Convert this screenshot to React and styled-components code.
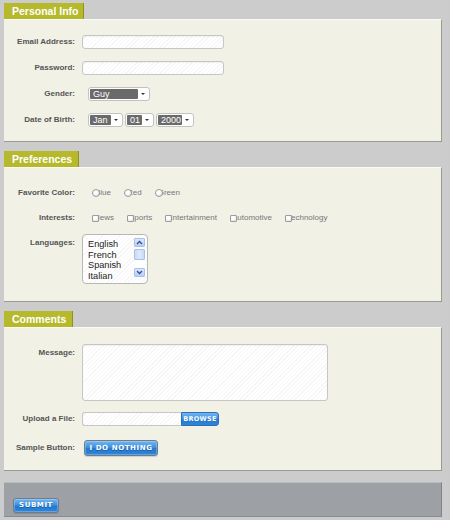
import React from 'react';
import styled, { createGlobalStyle } from 'styled-components';

const Global = createGlobalStyle`
  html, body { margin: 0; padding: 0; background: #cccccc; }
  body { font-family: 'Liberation Sans', Arial, sans-serif; }
  * { box-sizing: border-box; }
`;

const stripes = `repeating-linear-gradient(135deg, #ffffff 0px, #ffffff 2px, #f6f6f6 2px, #f6f6f6 3px)`;

const Page = styled.div`
  width: 450px;
  height: 520px;
  padding: 3px 8px 0 4px;
  display: flex;
  flex-direction: column;
  gap: 9px;
  background: #cccccc;
`;

const Section = styled.section`
  display: flex;
  flex-direction: column;
`;

const Tab = styled.h2`
  margin: 0;
  align-self: flex-start;
  width: ${p => p.$w}px;
  height: 16px;
  padding-left: 8px;
  background: #b6b92b;
  border-right: 1px solid #8f921c;
  color: #ffffff;
  font: bold 10.5px/16px 'Liberation Sans', Arial, sans-serif;
  white-space: nowrap;
`;

const Panel = styled.div`
  background: #f1f1e6;
  border-top: 1px solid #fbfbf5;
  border-right: 1px solid #999a94;
  border-bottom: 1px solid #999a94;
  padding: ${p => p.$pt}px 0 ${p => p.$pb}px 0;
  display: flex;
  flex-direction: column;
`;

const Row = styled.div`
  display: flex;
  align-items: ${p => (p.$top ? 'flex-start' : 'center')};
  height: ${p => p.$h}px;
  margin-top: ${p => p.$mt || 0}px;
`;

const Label = styled.label`
  flex: none;
  width: 71px;
  margin-right: 7px;
  padding-top: ${p => p.$pt || 0}px;
  text-align: right;
  color: #555555;
  font: bold 8px/10px 'Liberation Sans', Arial, sans-serif;
  white-space: nowrap;
`;

const TextInput = styled.input`
  width: ${p => p.$w}px;
  height: 14px;
  margin: 0;
  padding: 0 3px;
  border: 1px solid #c6c6c6;
  border-radius: 3px;
  background: ${stripes};
  box-shadow: inset 0 1px 1px rgba(0,0,0,0.05);
  font: 9px 'Liberation Sans', Arial, sans-serif;
  outline: none;
`;

const TextArea = styled.textarea`
  width: 246px;
  height: 57px;
  margin: 0;
  padding: 3px;
  border: 1px solid #c6c6c6;
  border-radius: 3px;
  background: ${stripes};
  box-shadow: inset 0 1px 1px rgba(0,0,0,0.05);
  resize: none;
  outline: none;
`;

const Selects = styled.div`
  display: flex;
  gap: 2px;
  margin-left: 6px;
`;

const Select = styled.div`
  display: flex;
  width: ${p => p.$w}px;
  height: 14px;
  padding: 1px;
  border: 1px solid #c2c2c2;
  border-radius: 3px;
  background: #ffffff;
`;

const SelectValue = styled.span`
  flex: 1;
  padding-left: 3px;
  background: #6a6a6a;
  border-radius: 1px;
  color: #ffffff;
  font: 9px/10px 'Liberation Sans', Arial, sans-serif;
`;

const SelectArrow = styled.span`
  flex: none;
  width: 10px;
  display: flex;
  align-items: center;
  justify-content: center;
  &::after {
    content: '';
    border-left: 2px solid transparent;
    border-right: 2px solid transparent;
    border-top: 2px solid #333333;
  }
`;

const Choices = styled.div`
  display: flex;
  align-items: center;
  gap: ${p => p.$gap}px;
  margin-left: 10px;
`;

const Choice = styled.span`
  display: inline-flex;
  align-items: center;
  color: #777777;
  font: 8px/10px 'Liberation Sans', Arial, sans-serif;
  white-space: nowrap;
`;

const Mark = styled.span`
  position: relative;
  z-index: 1;
  flex: none;
  width: ${p => (p.$round ? 8 : 7)}px;
  height: ${p => (p.$round ? 8 : 7)}px;
  margin-right: -5px;
  border: 1px solid #9c9c9c;
  border-radius: ${p => (p.$round ? '50%' : '1px')};
  background: radial-gradient(circle at 40% 35%, #ffffff 30%, #dcdcdc 100%);
`;

const ListBox = styled.div`
  display: flex;
  width: 66px;
  height: 50px;
  padding: 3px 2px 6px 5px;
  border: 1px solid #b8b8b8;
  border-radius: 4px;
  background: ${stripes};
`;

const ListItems = styled.ul`
  flex: 1;
  margin: 0;
  padding: 1px 0 0 0;
  list-style: none;
  color: #222222;
  font: 9.2px/10.5px 'Liberation Sans', Arial, sans-serif;
`;

const ScrollBar = styled.div`
  flex: none;
  width: 11px;
  display: flex;
  flex-direction: column;
  background: #ffffff;
`;

const ScrollButton = styled.span`
  height: 9px;
  display: flex;
  align-items: center;
  justify-content: center;
  border: 1px solid #aac0e8;
  border-radius: 1px;
  background: linear-gradient(#dce7fb, #b8cdf4);
  margin-top: ${p => (p.$down ? 'auto' : '0')};
`;

const ScrollThumb = styled.span`
  height: 11px;
  margin-top: 2px;
  border: 1px solid #aac0e8;
  border-radius: 1px;
  background: linear-gradient(90deg, #c9d9f8, #dfe8fb, #c9d9f8);
`;

const FileField = styled.div`
  display: flex;
  height: 14px;
`;

const FileInput = styled.input`
  width: 99px;
  height: 14px;
  margin: 0;
  border: 1px solid #c6c6c6;
  border-right: none;
  border-radius: 3px 0 0 3px;
  background: ${stripes};
  outline: none;
`;

const blueFill = `linear-gradient(#74b5ef 0%, #3f93e0 45%, #2478cf 55%, #2f86d9 100%)`;

const BrowseButton = styled.button`
  width: 38px;
  height: 14px;
  margin: 0;
  padding: 0;
  border: 1px solid #2c6fb5;
  border-radius: 0 3px 3px 0;
  background: ${blueFill};
  color: #ffffff;
  font: bold 6.5px/12px 'DejaVu Sans', Verdana, sans-serif;
  letter-spacing: 0.3px;
`;

const BlueButton = styled.button`
  width: ${p => p.$w}px;
  height: ${p => p.$h}px;
  margin: 0 0 0 ${p => p.$ml || 0}px;
  padding: 0;
  border: 1px solid #6d7c8a;
  border-radius: 3px;
  background: ${blueFill};
  box-shadow: inset 0 0 0 1px rgba(255,255,255,0.25), 0 1px 1px rgba(0,0,0,0.15);
  color: #ffffff;
  font: bold 7px/${p => p.$h - 2}px 'DejaVu Sans', Verdana, sans-serif;
  letter-spacing: 0.6px;
  text-shadow: 0 1px 0 rgba(0,0,0,0.25);
  white-space: nowrap;
`;

const Footer = styled.div`
  margin-top: 2px;
  height: 35px;
  padding: 10px 0 0 9px;
  background: #9da1a5;
  border-top: 1px solid #b9bdc0;
  border-right: 1px solid #80848a;
  border-bottom: 1px solid #878b90;
`;

function Chevron({ down }) {
  return (
    <svg width="7" height="5" viewBox="0 0 7 5">
      <path
        d={down ? 'M1 1 L3.5 3.5 L6 1' : 'M1 4 L3.5 1.5 L6 4'}
        fill="none"
        stroke="#2b4f9a"
        strokeWidth="1.3"
      />
    </svg>
  );
}

function Dropdown({ w, value }) {
  return (
    <Select $w={w}>
      <SelectValue>{value}</SelectValue>
      <SelectArrow />
    </Select>
  );
}

export default function App() {
  return (
    <>
      <Global />
      <Page>
        <Section>
          <Tab $w={80}>Personal Info</Tab>
          <Panel $pt={15} $pb={14}>
            <Row $h={14}>
              <Label>Email Address:</Label>
              <TextInput $w={142} type="text" />
            </Row>
            <Row $h={14} $mt={12}>
              <Label>Password:</Label>
              <TextInput $w={142} type="password" />
            </Row>
            <Row $h={14} $mt={12}>
              <Label>Gender:</Label>
              <Selects>
                <Dropdown w={62} value="Guy" />
              </Selects>
            </Row>
            <Row $h={14} $mt={12}>
              <Label>Date of Birth:</Label>
              <Selects>
                <Dropdown w={35} value="Jan" />
                <Dropdown w={29} value="01" />
                <Dropdown w={38} value="2000" />
              </Selects>
            </Row>
          </Panel>
        </Section>

        <Section>
          <Tab $w={75}>Preferences</Tab>
          <Panel $pt={18} $pb={17}>
            <Row $h={14}>
              <Label>Favorite Color:</Label>
              <Choices $gap={13}>
                <Choice><Mark $round />Blue</Choice>
                <Choice><Mark $round />Red</Choice>
                <Choice><Mark $round />Green</Choice>
              </Choices>
            </Row>
            <Row $h={14} $mt={11}>
              <Label>Interests:</Label>
              <Choices $gap={13}>
                <Choice><Mark />News</Choice>
                <Choice><Mark />Sports</Choice>
                <Choice><Mark />Entertainment</Choice>
                <Choice><Mark />Automotive</Choice>
                <Choice><Mark />Technology</Choice>
              </Choices>
            </Row>
            <Row $h={50} $mt={9} $top>
              <Label $pt={4}>Languages:</Label>
              <ListBox>
                <ListItems>
                  <li>English</li>
                  <li>French</li>
                  <li>Spanish</li>
                  <li>Italian</li>
                </ListItems>
                <ScrollBar>
                  <ScrollButton><Chevron /></ScrollButton>
                  <ScrollThumb />
                  <ScrollButton $down><Chevron down /></ScrollButton>
                </ScrollBar>
              </ListBox>
            </Row>
          </Panel>
        </Section>

        <Section>
          <Tab $w={69}>Comments</Tab>
          <Panel $pt={16} $pb={14}>
            <Row $h={57} $top>
              <Label $pt={4}>Message:</Label>
              <TextArea />
            </Row>
            <Row $h={14} $mt={11}>
              <Label>Upload a File:</Label>
              <FileField>
                <FileInput type="text" />
                <BrowseButton>BROWSE</BrowseButton>
              </FileField>
            </Row>
            <Row $h={16} $mt={14}>
              <Label>Sample Button:</Label>
              <BlueButton $w={74} $h={16} $ml={2}>I DO NOTHING</BlueButton>
            </Row>
          </Panel>
        </Section>

        <Footer>
          <BlueButton $w={46} $h={15}>SUBMIT</BlueButton>
        </Footer>
      </Page>
    </>
  );
}
